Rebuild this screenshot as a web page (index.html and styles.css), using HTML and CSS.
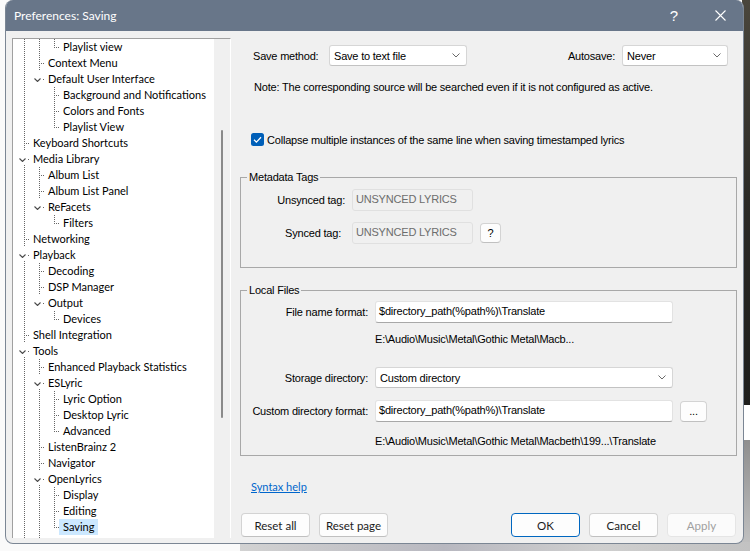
FILE: index.html
```html
<!DOCTYPE html>
<html>
<head>
<meta charset="utf-8">
<title>Preferences: Saving</title>
<link rel="stylesheet" href="styles.css">
</head>
<body>
<div class="desk-right"></div>
<div class="desk-bottom"></div>
<div class="dialog">
  <div class="titlebar">
    <span class="title">Preferences: Saving</span>
    <span class="tb-btn tb-help">?</span>
    <span class="tb-btn"><svg width="11" height="11" viewBox="0 0 11 11"><path d="M0.5 0.5 L10.5 10.5 M10.5 0.5 L0.5 10.5" stroke="#fff" stroke-width="1.1" fill="none"/></svg></span>
  </div>
  <div class="client">
    <div class="tree">
      <div class="tree-list">
        <div class="row"><span class="g v"></span><span class="g v"></span><span class="c last"></span><span class="lbl">Playlist view</span></div>
        <div class="row"><span class="g v"></span><span class="c mid"></span><span class="lbl">Context Menu</span></div>
        <div class="row"><span class="g v"></span><span class="c last exp"><svg class="chev" width="7" height="4" viewBox="0 0 7 4"><polyline points="0.5,0.5 3.5,3.5 6.5,0.5" fill="none" stroke="#4a4a4a" stroke-width="1.1"/></svg></span><span class="lbl">Default User Interface</span></div>
        <div class="row"><span class="g v"></span><span class="g"></span><span class="c mid"></span><span class="lbl">Background and Notifications</span></div>
        <div class="row"><span class="g v"></span><span class="g"></span><span class="c mid"></span><span class="lbl">Colors and Fonts</span></div>
        <div class="row"><span class="g v"></span><span class="g"></span><span class="c last"></span><span class="lbl">Playlist View</span></div>
        <div class="row"><span class="c mid"></span><span class="lbl">Keyboard Shortcuts</span></div>
        <div class="row"><span class="c mid exp"><svg class="chev" width="7" height="4" viewBox="0 0 7 4"><polyline points="0.5,0.5 3.5,3.5 6.5,0.5" fill="none" stroke="#4a4a4a" stroke-width="1.1"/></svg></span><span class="lbl">Media Library</span></div>
        <div class="row"><span class="g v"></span><span class="c mid"></span><span class="lbl">Album List</span></div>
        <div class="row"><span class="g v"></span><span class="c mid"></span><span class="lbl">Album List Panel</span></div>
        <div class="row"><span class="g v"></span><span class="c last exp"><svg class="chev" width="7" height="4" viewBox="0 0 7 4"><polyline points="0.5,0.5 3.5,3.5 6.5,0.5" fill="none" stroke="#4a4a4a" stroke-width="1.1"/></svg></span><span class="lbl">ReFacets</span></div>
        <div class="row"><span class="g v"></span><span class="g"></span><span class="c last"></span><span class="lbl">Filters</span></div>
        <div class="row"><span class="c mid"></span><span class="lbl">Networking</span></div>
        <div class="row"><span class="c mid exp"><svg class="chev" width="7" height="4" viewBox="0 0 7 4"><polyline points="0.5,0.5 3.5,3.5 6.5,0.5" fill="none" stroke="#4a4a4a" stroke-width="1.1"/></svg></span><span class="lbl">Playback</span></div>
        <div class="row"><span class="g v"></span><span class="c mid"></span><span class="lbl">Decoding</span></div>
        <div class="row"><span class="g v"></span><span class="c mid"></span><span class="lbl">DSP Manager</span></div>
        <div class="row"><span class="g v"></span><span class="c last exp"><svg class="chev" width="7" height="4" viewBox="0 0 7 4"><polyline points="0.5,0.5 3.5,3.5 6.5,0.5" fill="none" stroke="#4a4a4a" stroke-width="1.1"/></svg></span><span class="lbl">Output</span></div>
        <div class="row"><span class="g v"></span><span class="g"></span><span class="c last"></span><span class="lbl">Devices</span></div>
        <div class="row"><span class="c mid"></span><span class="lbl">Shell Integration</span></div>
        <div class="row"><span class="c mid exp"><svg class="chev" width="7" height="4" viewBox="0 0 7 4"><polyline points="0.5,0.5 3.5,3.5 6.5,0.5" fill="none" stroke="#4a4a4a" stroke-width="1.1"/></svg></span><span class="lbl">Tools</span></div>
        <div class="row"><span class="g v"></span><span class="c mid"></span><span class="lbl">Enhanced Playback Statistics</span></div>
        <div class="row"><span class="g v"></span><span class="c mid exp"><svg class="chev" width="7" height="4" viewBox="0 0 7 4"><polyline points="0.5,0.5 3.5,3.5 6.5,0.5" fill="none" stroke="#4a4a4a" stroke-width="1.1"/></svg></span><span class="lbl">ESLyric</span></div>
        <div class="row"><span class="g v"></span><span class="g v"></span><span class="c mid"></span><span class="lbl">Lyric Option</span></div>
        <div class="row"><span class="g v"></span><span class="g v"></span><span class="c mid"></span><span class="lbl">Desktop Lyric</span></div>
        <div class="row"><span class="g v"></span><span class="g v"></span><span class="c last"></span><span class="lbl">Advanced</span></div>
        <div class="row"><span class="g v"></span><span class="c mid"></span><span class="lbl">ListenBrainz 2</span></div>
        <div class="row"><span class="g v"></span><span class="c mid"></span><span class="lbl">Navigator</span></div>
        <div class="row"><span class="g v"></span><span class="c mid exp"><svg class="chev" width="7" height="4" viewBox="0 0 7 4"><polyline points="0.5,0.5 3.5,3.5 6.5,0.5" fill="none" stroke="#4a4a4a" stroke-width="1.1"/></svg></span><span class="lbl">OpenLyrics</span></div>
        <div class="row"><span class="g v"></span><span class="g v"></span><span class="c mid"></span><span class="lbl">Display</span></div>
        <div class="row"><span class="g v"></span><span class="g v"></span><span class="c mid"></span><span class="lbl">Editing</span></div>
        <div class="row"><span class="g v"></span><span class="g v"></span><span class="c last"></span><span class="lbl sel">Saving</span></div>
        <div class="row"><span class="g v"></span><span class="g v"></span></div>
      </div>
      <div class="scroll"><div class="thumb"></div></div>
    </div>

    <div class="page">
      <div class="top-row">
        <span class="lab-save">Save method:</span>
        <div class="combo w-save"><span>Save to text file</span><svg width="8" height="5" viewBox="0 0 8 5"><polyline points="0.5,0.5 4,4 7.5,0.5" fill="none" stroke="#6a6a6a" stroke-width="1"/></svg></div>
        <span class="lab-auto">Autosave:</span>
        <div class="combo w-auto"><span>Never</span><svg width="8" height="5" viewBox="0 0 8 5"><polyline points="0.5,0.5 4,4 7.5,0.5" fill="none" stroke="#6a6a6a" stroke-width="1"/></svg></div>
      </div>
      <div class="note">Note: The corresponding source will be searched even if it is not configured as active.</div>
      <div class="check-row">
        <svg class="checkbox" width="13" height="13" viewBox="0 0 13 13"><rect x="0" y="0" width="13" height="13" rx="2.5" fill="#005fb8"/><polyline points="3,6.8 5.4,9.1 10,4.2" fill="none" stroke="#fff" stroke-width="1.3"/></svg>
        <span>Collapse multiple instances of the same line when saving timestamped lyrics</span>
      </div>

      <fieldset class="group g-meta">
        <legend>Metadata Tags</legend>
        <div class="frow r-unsynced">
          <span class="flab flab-meta">Unsynced tag:</span>
          <div class="field disabled w-tag">UNSYNCED LYRICS</div>
        </div>
        <div class="frow r-synced">
          <span class="flab flab-meta flab-synced">Synced tag:</span>
          <div class="field disabled w-tag">UNSYNCED LYRICS</div>
          <div class="btn small q">?</div>
        </div>
      </fieldset>

      <fieldset class="group g-local">
        <legend>Local Files</legend>
        <div class="frow r-fname">
          <span class="flab flab-local">File name format:</span>
          <div class="field w-path">$directory_path(%path%)\Translate</div>
        </div>
        <div class="preview p1">E:\Audio\Music\Metal\Gothic Metal\Macb...</div>
        <div class="frow r-storage">
          <span class="flab flab-local">Storage directory:</span>
          <div class="combo w-path"><span>Custom directory</span><svg width="8" height="5" viewBox="0 0 8 5"><polyline points="0.5,0.5 4,4 7.5,0.5" fill="none" stroke="#6a6a6a" stroke-width="1"/></svg></div>
        </div>
        <div class="frow r-custom">
          <span class="flab flab-local">Custom directory format:</span>
          <div class="field w-path">$directory_path(%path%)\Translate</div>
          <div class="btn small dots">...</div>
        </div>
        <div class="preview p2">E:\Audio\Music\Metal\Gothic Metal\Macbeth\199...\Translate</div>
      </fieldset>

      <div class="link-row"><span class="link">Syntax help</span></div>

      <div class="buttons">
        <div class="btn big">Reset all</div>
        <div class="btn big">Reset page</div>
        <div class="btn big ok">OK</div>
        <div class="btn big">Cancel</div>
        <div class="btn big disabled-btn">Apply</div>
      </div>
    </div>
  </div>
</div>
</body>
</html>
```

FILE: styles.css
```css
* { box-sizing: border-box; }
html, body { margin: 0; padding: 0; }
body {
  width: 750px;
  height: 551px;
  overflow: hidden;
  position: relative;
  background: #fafafa;
  font-family: "Liberation Sans", Arial, sans-serif;
  font-size: 11px;
  letter-spacing: -0.2px;
  color: #000;
}

.desk-right {
  position: absolute;
  right: 0;
  top: 0;
  width: 8px;
  height: 551px;
  background: linear-gradient(to bottom, #4a463c 0, #2b2a26 200px, #1e1e1c 405px, #ffffff 405px, #ffffff 440px, #8e8e8e 440px, #c4c4c4 551px);
}
.desk-bottom {
  position: absolute;
  left: 240px;
  right: 0;
  bottom: 0;
  height: 9px;
  background: linear-gradient(to right, #d2d2d2, #b8b8c0 40%, #cfcfcf 70%, #c2c2c2);
}

.dialog {
  position: absolute;
  left: 5px;
  top: 0;
  width: 739px;
  height: 544px;
  border: 1px solid #7b8694;
  border-top: none;
  border-radius: 8px;
  overflow: hidden;
  background: #f0f0f0;
  display: flex;
  flex-direction: column;
}

.titlebar {
  height: 31px;
  flex: none;
  background: #687689;
  display: flex;
  align-items: center;
  color: #fff;
  padding-left: 8px;
  font-family: "Lato", "Liberation Sans", sans-serif;
  font-size: 12px;
  letter-spacing: 0;
}
.title { flex: 1; }
.tb-btn {
  width: 46px;
  height: 31px;
  display: flex;
  align-items: center;
  justify-content: center;
}
.tb-help { font-size: 15px; font-family: "Liberation Sans", sans-serif; }

.client {
  flex: 1;
  display: flex;
  padding: 7px 0 0 6px;
}

/* tree */
.tree {
  width: 219px;
  height: 500px;
  flex: none;
  border-top: 1px solid #a0a0a0;
  border-left: 1px solid #a0a0a0;
  border-right: 1px solid #ffffff;
  background: #fff;
  display: flex;
  overflow: hidden;
}
.tree-list {
  width: 201px;
  flex: none;
  padding-left: 4px;
  overflow: hidden;
  font-family: "Lato", "Liberation Sans", sans-serif;
  font-size: 11px;
  letter-spacing: 0;
}
.scroll {
  width: 16px;
  flex: none;
  background: #f0f0f0;
  padding: 91px 0 0 7px;
}
.thumb {
  width: 2px;
  height: 288px;
  background: #8a8a8a;
  border-radius: 1px;
}

.row { display: flex; height: 16px; }
.g { width: 15px; flex: none; position: relative; }
.g.v::before {
  content: "";
  position: absolute;
  left: 7px;
  top: 0;
  width: 1px;
  height: 16px;
  background: repeating-linear-gradient(to bottom, #666 0 1px, transparent 1px 2px);
}
.c { width: 12px; flex: none; position: relative; }
.c::before {
  content: "";
  position: absolute;
  left: 7px;
  top: 0;
  width: 1px;
  height: 16px;
  background: repeating-linear-gradient(to bottom, #666 0 1px, transparent 1px 2px);
}
.c.last::before { height: 9px; }
.c::after {
  content: "";
  position: absolute;
  left: 7px;
  top: 8px;
  width: 5px;
  height: 1px;
  background: repeating-linear-gradient(to right, #666 0 1px, transparent 1px 2px);
}
.c.exp { display: flex; align-items: center; padding-left: 2px; }
.c.exp.last::before { display: none; }
.c.exp.mid::before { top: 14px; height: 2px; }
.c.exp::after { left: 11px; width: 1px; }
.chev { display: block; margin-top: 1px; }

.lbl {
  padding: 0 4px 0 4px;
  line-height: 16px;
  white-space: nowrap;
  color: #000;
}
.lbl.sel { background: #cce8ff; }

/* page */
.page {
  flex: 1;
  display: flex;
  flex-direction: column;
  padding: 7px 6px 0 9px;
}
.top-row {
  display: flex;
  align-items: center;
  height: 21px;
  padding-left: 13px;
}
.lab-save { width: 76px; }
.lab-auto { margin-left: auto; margin-right: 7px; }
.combo {
  height: 21px;
  background: #fff;
  border: 1px solid #d6d6d6;
  border-bottom-color: #c2c2c2;
  border-radius: 3px;
  display: flex;
  align-items: center;
  justify-content: space-between;
  padding: 0 6px 0 4px;
}
.combo svg { display: block; }
.w-save { width: 138px; }
.w-auto { width: 106px; margin-right: 9px; }
.note { margin-top: 14px; padding-left: 14px; line-height: 14px; }
.check-row {
  margin-top: 39px;
  display: flex;
  align-items: center;
  height: 13px;
  padding-left: 11px;
}
.checkbox { display: block; margin-right: 3px; }

.group {
  margin: 0;
  padding: 0;
  min-width: 0;
  border: 1px solid #a8a8a8;
}
.group legend {
  margin-left: 6px;
  padding: 0 2px;
  line-height: 14px;
}
.g-meta { margin-top: 24px; height: 98px; }
.g-local { margin-top: 15px; height: 173px; }

.frow { display: flex; align-items: center; }
.flab { text-align: right; flex: none; padding-right: 7px; }
.flab-meta { width: 111px; }
.flab-synced { padding-right: 11px; }
.flab-local { width: 134px; }
.r-unsynced { margin-top: 5px; }
.r-synced { margin-top: 11px; }
.r-fname { margin-top: 4px; }
.r-storage { margin-top: 21px; }
.r-custom { margin-top: 12px; }

.field {
  height: 22px;
  background: #fff;
  border: 1px solid #e2e2e2;
  border-bottom-color: #a8a8a8;
  border-radius: 3px;
  padding: 2px 3px 0;
  line-height: 14px;
  white-space: nowrap;
  overflow: hidden;
}
.field.disabled {
  background: #f0f0f0;
  border-color: #e0e0e0;
  color: #6d6d6d;
}
.w-tag { width: 121px; }
.w-path { width: 298px; }

.preview { padding-left: 134px; line-height: 14px; }
.p1 { margin-top: 9px; }
.p2 { margin-top: 12px; }

.btn {
  display: flex;
  align-items: center;
  justify-content: center;
  background: #fdfdfd;
  border: 1px solid #d3d3d3;
  border-bottom-color: #c0c0c0;
  border-radius: 4px;
  flex: none;
}
.btn.small { height: 21px; margin-left: 7px; }
.btn.q { width: 21px; height: 20px; }
.btn.dots { width: 27px; }

.link-row { margin-top: 24px; padding-left: 11px; line-height: 14px; }
.link {
  color: #0066cc;
  text-decoration: underline;
  font-family: "Lato", "Liberation Sans", sans-serif;
  font-size: 11px;
  letter-spacing: 0;
}

.buttons {
  margin-top: 19px;
  display: flex;
  height: 24px;
  padding: 0 1px;
  gap: 9px;
}
.btn.big {
  width: 69px;
  height: 24px;
  font-family: "Lato", "Liberation Sans", sans-serif;
  font-size: 11.5px;
  letter-spacing: 0;
  color: #1b1b1b;
}
.btn.ok { margin-left: auto; border-color: #0067c0; }
.btn.disabled-btn { color: #a0a0a0; background: #fbfbfb; border-color: #e5e5e5; }
```
